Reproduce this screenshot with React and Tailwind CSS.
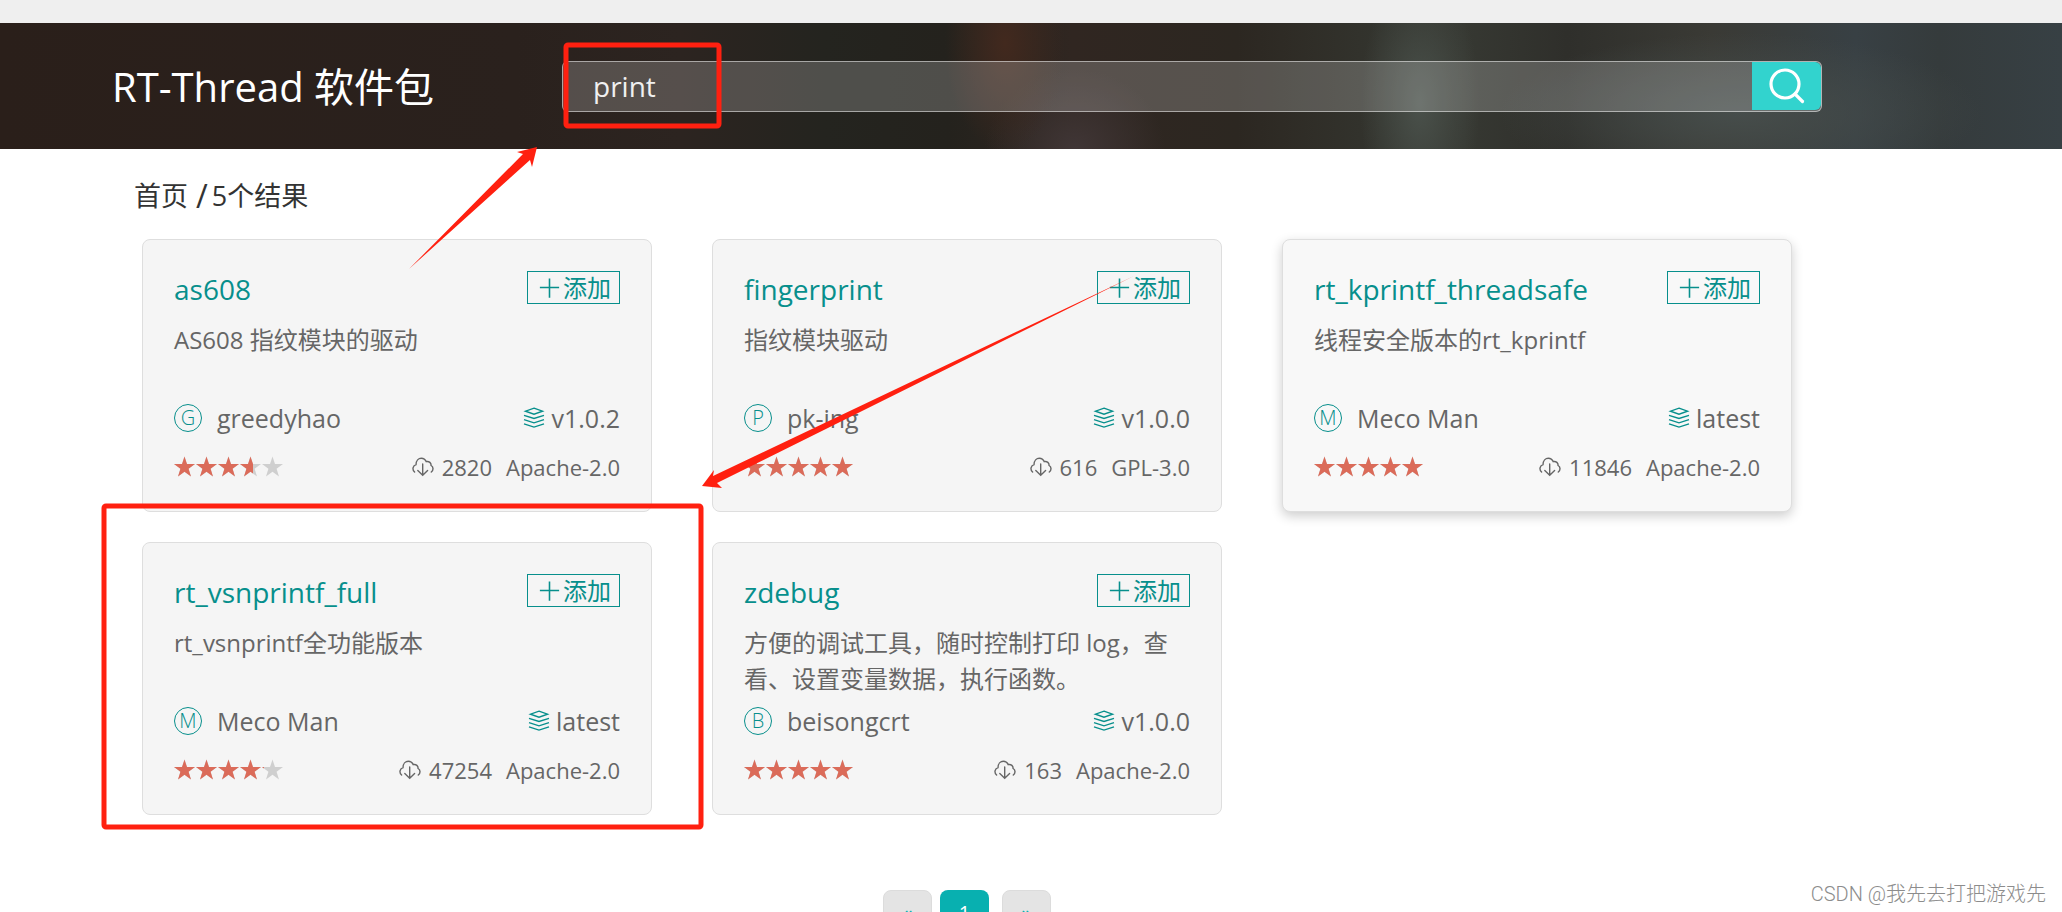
import React, { useState } from "react";

const packages = [
  { name: "as608", desc: "AS608 指纹模块的驱动", author: "greedyhao", version: "v1.0.2", rating: 3.6, downloads: 2820, license: "Apache-2.0" },
  { name: "fingerprint", desc: "指纹模块驱动", author: "pk-ing", version: "v1.0.0", rating: 5, downloads: 616, license: "GPL-3.0" },
  { name: "rt_kprintf_threadsafe", desc: "线程安全版本的rt_kprintf", author: "Meco Man", version: "latest", rating: 5, downloads: 11846, license: "Apache-2.0", active: true },
  { name: "rt_vsnprintf_full", desc: "rt_vsnprintf全功能版本", author: "Meco Man", version: "latest", rating: 4.1, downloads: 47254, license: "Apache-2.0" },
  { name: "zdebug", desc: "方便的调试工具，随时控制打印 log，查看、设置变量数据，执行函数。", author: "beisongcrt", version: "v1.0.0", rating: 5, downloads: 163, license: "Apache-2.0" },
];

function LayersIcon() {
  return (
    <svg viewBox="0 0 22 22" className="w-[22px] h-[22px] text-[#078f8c]" fill="none" stroke="currentColor" strokeWidth="1.4">
      <path d="M11 1.2 19.5 4.2 11 7.2 2.5 4.2Z" />
      <path d="M1 8.3l10 3.2 10-3.2M1 12.6l10 3.2 10-3.2M1 16.9l10 3.2 10-3.2" />
    </svg>
  );
}

function CloudIcon() {
  return (
    <svg viewBox="0 0 22 20" className="w-[22px] h-5" fill="none" stroke="currentColor" strokeWidth="1.4" strokeLinecap="round">
      <path d="M2.6 15C0 12.6.6 8.8 4 7.7 4 3.5 6.6 1.2 9.3 1.2c2.4 0 4 1.2 5 3.4 3-.5 4.900 1.300 4.800 3.900 2.500 1.500 2.500 4.700.2 6.500" />
      <path d="M10.7 7v11M5.8 13.6l4.9 4.6 4.9-4.6" />
    </svg>
  );
}

function StarRow({ className }) {
  return (
    <svg viewBox="0 0 110 22" className={className} fill="currentColor">
      {[0, 22, 44, 66, 88].map((x) => (
        <path key={x} transform={`translate(${x} 0)`} d="M10.5.5l2.500 7.600h8l-6.400 4.700 2.400 7.700-6.500-4.700L4 20.500l2.400-7.700L0 8.100h8z" />
      ))}
    </svg>
  );
}

function Rating({ value }) {
  return (
    <div className="relative w-[110px] h-[22px]">
      <StarRow className="w-[110px] h-[22px] text-[#cfcfcf]" />
      <div className="absolute inset-y-0 left-0 overflow-hidden" style={{ width: `${value * 20}%` }}>
        <StarRow className="w-[110px] h-[22px] max-w-none text-[#db6b59]" />
      </div>
    </div>
  );
}

function PackageCard({ pkg }) {
  return (
    <article
      className={`h-[273px] px-[31px] pt-[31px] flex flex-col rounded-lg border border-[#dedede] text-[#666]
      ${pkg.active ? "bg-[#f8f8f8] shadow-[0_4px_12px_rgba(0,0,0,0.2)]" : "bg-[#f5f5f5]"}`}
    >
      <div className="flex items-start justify-between">
        <a href="#" className="text-[28px] leading-[36px] text-[#078f8c]">{pkg.name}</a>
        <button className="flex items-center w-[93px] h-[33px] pl-[11px] border border-[#078f8c] text-2xl leading-[30px] text-[#078f8c] whitespace-nowrap">
          <svg viewBox="0 0 24 24" className="w-[21px] h-6 mr-[3px]" fill="none" stroke="currentColor" strokeWidth="1.8">
            <path d="M1 11.5h22M12 1v22" />
          </svg>
          添加
        </button>
      </div>

      <p className="mt-[15px] h-[72px] text-2xl leading-[36px]">{pkg.desc}</p>

      <div className="mt-1.5 flex items-center justify-between text-[25px] leading-[36px]">
        <div className="flex items-center">
          <span className="flex items-center justify-center w-7 h-7 mr-[15px] rounded-full border border-[#078f8c] text-xl font-light text-[#078f8c]">
            {pkg.author[0].toUpperCase()}
          </span>
          {pkg.author}
        </div>
        <div className="flex items-center gap-1.5">
          <LayersIcon />
          {pkg.version}
        </div>
      </div>

      <div className="mt-4 flex items-center justify-between text-[22px] leading-[30px]">
        <Rating value={pkg.rating} />
        <div className="flex items-center">
          <CloudIcon />
          <span className="ml-2 mr-3.5">{pkg.downloads}</span>
          <span>{pkg.license}</span>
        </div>
      </div>
    </article>
  );
}

export default function App() {
  const [query, setQuery] = useState("print");

  return (
    <div className="relative h-screen overflow-hidden bg-white font-['Open_Sans','Noto_Sans_CJK_SC',sans-serif]">
      <div className="h-[23px] bg-[#efefef]" />

      {/* Header */}
      <header className="flex items-center h-[126px] pl-[112px] bg-[radial-gradient(ellipse_60px_110px_at_1005px_20px,#42291e,transparent),radial-gradient(ellipse_90px_80px_at_1075px_126px,#403636,transparent),radial-gradient(ellipse_60px_130px_at_1420px_80px,#4a514b,transparent),radial-gradient(ellipse_240px_80px_at_1740px_90px,#464d4b,transparent),linear-gradient(90deg,#2a1f1a_0%,#2a211d_25%,#2c2420_33%,#24241f_40%,#24221d_46%,#302621_52%,#2c2721_60%,#33342e_67%,#363832_71%,#2f2f2b_76%,#3a3a35_83%,#384044_90%,#353b3c_94%,#374044_100%)]">
        <h1 className="w-[450px] pt-0.5 text-[40px] leading-[52px] text-white whitespace-nowrap">RT-Thread 软件包</h1>
        <form className="flex w-[1260px] h-[51px] rounded-md border border-white/50 bg-white/20 overflow-hidden" onSubmit={(e) => e.preventDefault()}>
          <input
            aria-label="搜索软件包"
            value={query}
            onChange={(e) => setQuery(e.target.value)}
            className="flex-1 min-w-0 px-[30px] text-[28px] text-[#f0f0f0] outline-none"
          />
          <button aria-label="搜索" className="flex items-center justify-center w-[69px] h-12 rounded-r-md bg-[#32d3ce] text-white">
            <svg viewBox="0 0 36 36" className="w-9 h-9" fill="none" stroke="currentColor" strokeWidth="3.2" strokeLinecap="round">
              <circle cx="16" cy="16" r="14" />
              <path d="M26 26l7.5 7.5" />
            </svg>
          </button>
        </form>
      </header>

      <main>
        <nav className="flex items-center pt-[28px] pl-[134px] text-[27px] leading-[38px] text-[#333]">
          <a href="#">首页</a>
          <span className="ml-2 mr-1 text-[32px]">/</span>
          <span>5个结果</span>
        </nav>

        <section className="mt-6 ml-[142px] grid grid-cols-[repeat(3,510px)] gap-x-[60px] gap-y-[30px]">
          {packages.map((pkg) => (
            <PackageCard key={pkg.name} pkg={pkg} />
          ))}
        </section>

        {/* Pagination */}
        <div className="mt-[75px] ml-[883px] flex text-xl text-[#08b0b0]">
          <button className="w-[49px] h-[45px] mr-2 rounded-lg border border-[#dcdcdc] bg-[#e4e4e4]">«</button>
          <button className="w-[49px] h-[45px] mr-[13px] rounded-lg bg-[#08b0b0] text-white">1</button>
          <button className="w-[49px] h-[45px] rounded-lg border border-[#dcdcdc] bg-[#e4e4e4]">»</button>
        </div>
      </main>

      {/* Red marks over the page */}
      <svg viewBox="0 0 2062 912" className="absolute left-0 top-0 w-[2062px] h-[912px] pointer-events-none" fill="#ff2010">
        <rect x="566" y="45" width="153" height="81" rx="2" fill="none" stroke="#ff2010" strokeWidth="5" />
        <rect x="104" y="506" width="597" height="321" rx="2" fill="none" stroke="#ff2010" strokeWidth="5" />
        <path d="M409 269 523 154 517 152 537 147 532 167 530 160Z" />
        <path d="M1134 276 713 476 714 470 702 486 722 488 717 483Z" />
      </svg>

      <div className="absolute right-4 bottom-1 text-xl leading-7 font-light text-[#8c8c8c] font-['Roboto','Noto_Sans_CJK_SC',sans-serif]">
        CSDN @我先去打把游戏先
      </div>
    </div>
  );
}
